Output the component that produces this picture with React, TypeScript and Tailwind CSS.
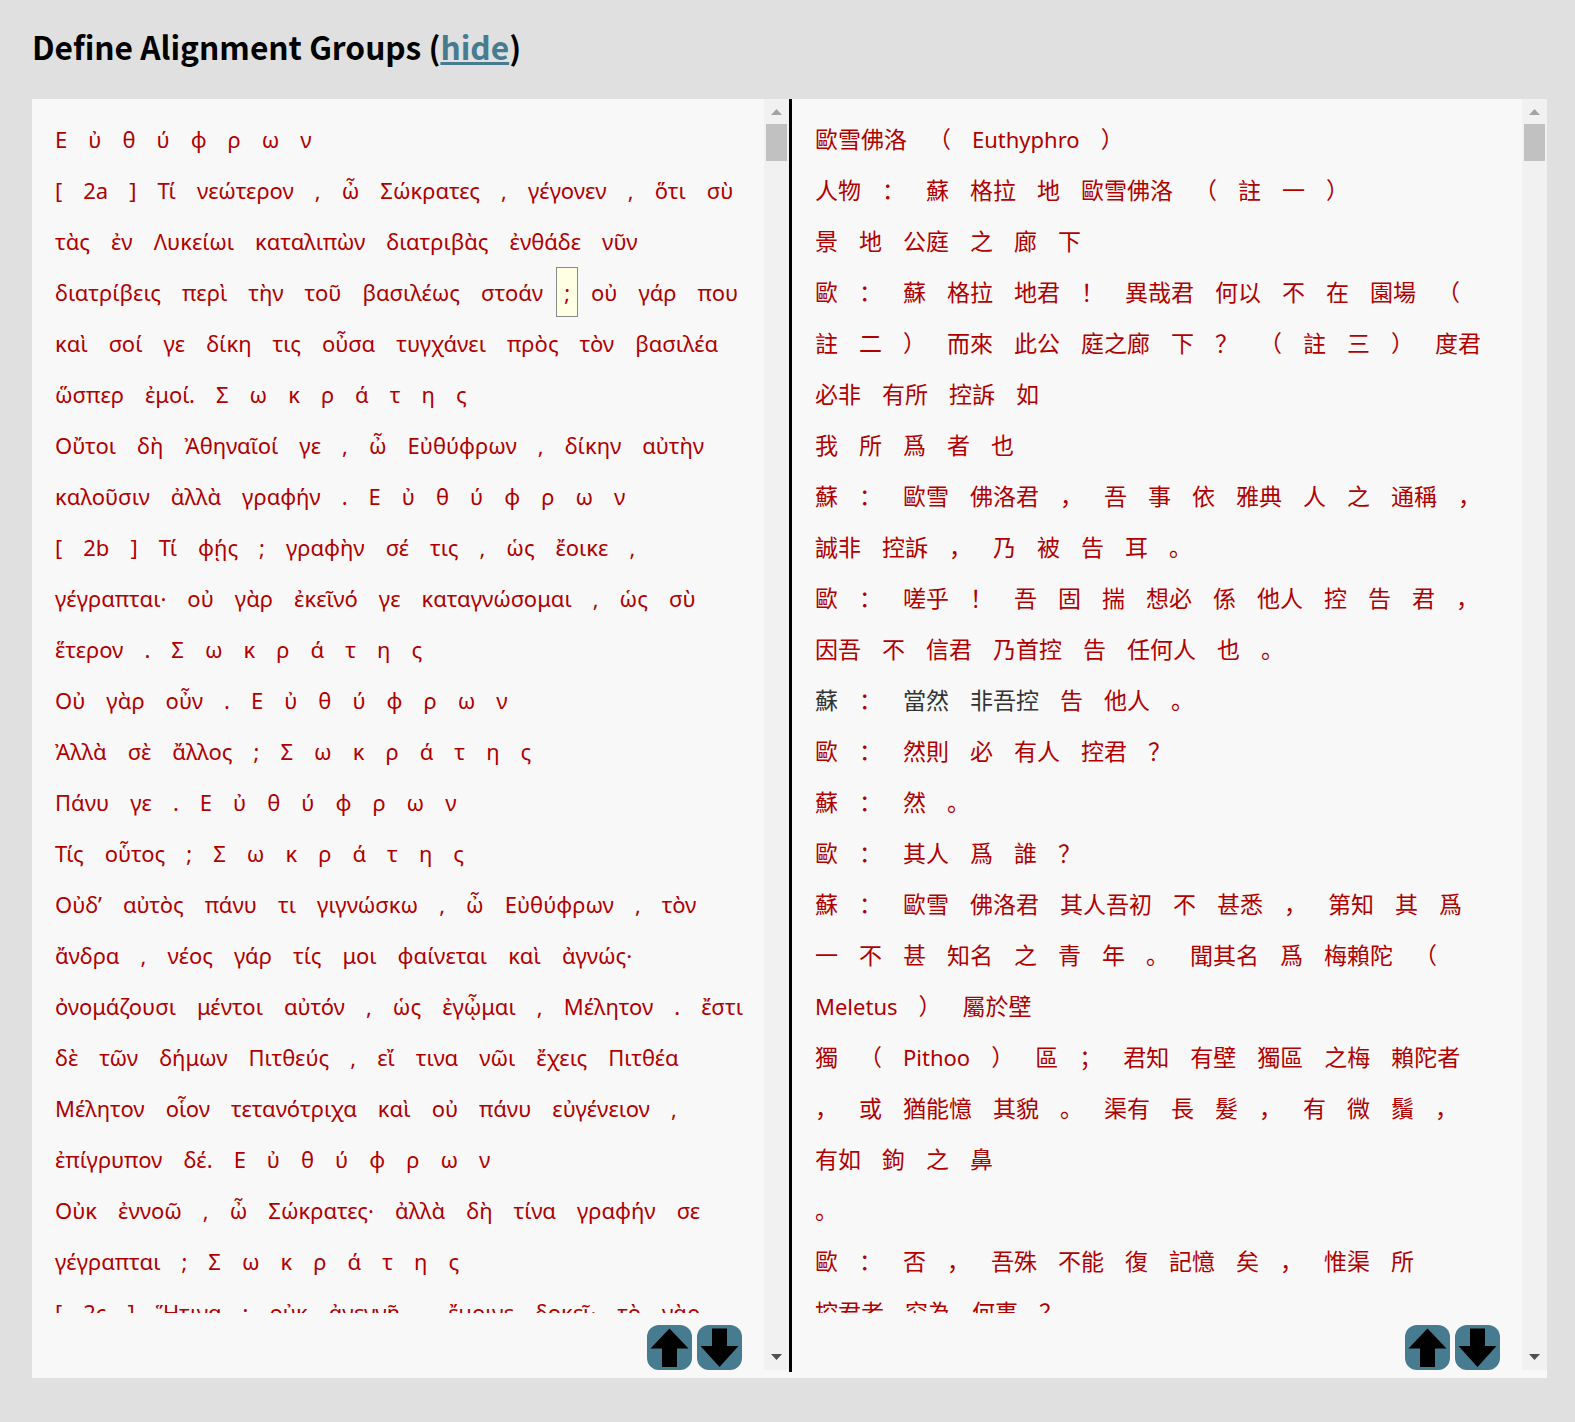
import React from "react";

const LEFT_LINES = [
  "Ε ὐ θ ύ φ ρ ω ν",
  "[ 2a ] Τί νεώτερον , ὦ Σώκρατες , γέγονεν , ὅτι σὺ",
  "τὰς ἐν Λυκείωι καταλιπὼν διατριβὰς ἐνθάδε νῦν",
  "διατρίβεις περὶ τὴν τοῦ βασιλέως στοάν ^; οὐ γάρ που",
  "καὶ σοί γε δίκη τις οὖσα τυγχάνει πρὸς τὸν βασιλέα",
  "ὥσπερ ἐμοί. Σ ω κ ρ ά τ η ς",
  "Οὔτοι δὴ Ἀθηναῖοί γε , ὦ Εὐθύφρων , δίκην αὐτὴν",
  "καλοῦσιν ἀλλὰ γραφήν . Ε ὐ θ ύ φ ρ ω ν",
  "[ 2b ] Τί φῄς ; γραφὴν σέ τις , ὡς ἔοικε ,",
  "γέγραπται· οὐ γὰρ ἐκεῖνό γε καταγνώσομαι , ὡς σὺ",
  "ἕτερον . Σ ω κ ρ ά τ η ς",
  "Οὐ γὰρ οὖν . Ε ὐ θ ύ φ ρ ω ν",
  "Ἀλλὰ σὲ ἄλλος ; Σ ω κ ρ ά τ η ς",
  "Πάνυ γε . Ε ὐ θ ύ φ ρ ω ν",
  "Τίς οὗτος ; Σ ω κ ρ ά τ η ς",
  "Οὐδ’ αὐτὸς πάνυ τι γιγνώσκω , ὦ Εὐθύφρων , τὸν",
  "ἄνδρα , νέος γάρ τίς μοι φαίνεται καὶ ἀγνώς·",
  "ὀνομάζουσι μέντοι αὐτόν , ὡς ἐγᾦμαι , Μέλητον . ἔστι",
  "δὲ τῶν δήμων Πιτθεύς , εἴ τινα νῶι ἔχεις Πιτθέα",
  "Μέλητον οἷον τετανότριχα καὶ οὐ πάνυ εὐγένειον ,",
  "ἐπίγρυπον δέ. Ε ὐ θ ύ φ ρ ω ν",
  "Οὐκ ἐννοῶ , ὦ Σώκρατες· ἀλλὰ δὴ τίνα γραφήν σε",
  "γέγραπται ; Σ ω κ ρ ά τ η ς",
  "[ 2c ] Ἥτινα ; οὐκ ἀγεννῆ , ἔμοιγε δοκεῖ· τὸ γὰρ",
  "νέον ὄντα τοσοῦτον πρᾶγμα ἐγνωκέναι οὐ φαῦλόν ἐστιν",
];

const RIGHT_LINES = [
  "歐雪佛洛 （ Euthyphro ）",
  "人物 ： 蘇 格拉 地 歐雪佛洛 （ 註 一 ）",
  "景 地 公庭 之 廊 下",
  "歐 ： 蘇 格拉 地君 ！ 異哉君 何以 不 在 園場 （",
  "註 二 ） 而來 此公 庭之廊 下 ？ （ 註 三 ） 度君",
  "必非 有所 控訴 如",
  "我 所 爲 者 也",
  "蘇 ： 歐雪 佛洛君 ， 吾 事 依 雅典 人 之 通稱 ，",
  "誠非 控訴 ， 乃 被 告 耳 。",
  "歐 ： 嗟乎 ！ 吾 固 揣 想必 係 他人 控 告 君 ，",
  "因吾 不 信君 乃首控 告 任何人 也 。",
  "~蘇 ： ~當然 ~非吾控 告 他人 。",
  "歐 ： 然則 必 有人 控君 ？",
  "蘇 ： 然 。",
  "歐 ： 其人 爲 誰 ？",
  "蘇 ： 歐雪 佛洛君 其人吾初 不 甚悉 ， 第知 其 爲",
  "一 不 甚 知名 之 青 年 。 聞其名 爲 梅賴陀 （",
  "Meletus ） 屬於壁",
  "獨 （ Pithoo ） 區 ； 君知 有壁 獨區 之梅 賴陀者",
  "， 或 猶能憶 其貌 。 渠有 長 髮 ， 有 微 鬚 ，",
  "有如 鉤 之 鼻",
  "。",
  "歐 ： 否 ， 吾殊 不能 復 記憶 矣 ， 惟渠 所",
  "控君者 究為 何事 ？",
  "蘇 ： 控 我 之 事",
];

const Token = ({ raw, cjk }: { raw: string; cjk: boolean }) => {
  const selected = raw.startsWith("^");
  const dark = raw.startsWith("~");
  const text = selected || dark ? raw.slice(1) : raw;
  // the Chinese glyphs in the reference run a touch larger than the Latin/Greek ones
  const size = cjk && !/[A-Za-z]/.test(text) ? "text-[23px]" : "text-[22px]";
  return (
    <span
      className={
        "h-[50px] px-[7px] leading-[48px] border " +
        size +
        " " +
        (selected
          ? "border-[#8a8a8a] bg-[#ffffe4] text-[#b00000]"
          : dark
          ? "border-transparent text-[#333333]"
          : "border-transparent text-[#b00000]")
      }
    >
      {text}
    </span>
  );
};

const ArrowButton = ({ dir }: { dir: "up" | "down" }) => (
  <button className="w-[45px] h-[45px] rounded-[12px] bg-[#477b8f] flex items-center justify-center">
    <svg width="45" height="45" viewBox="0 0 45 45">
      {dir === "up" ? (
        <polygon points="22.5,3.5 41.5,23.5 30,23.5 30,42 15,42 15,23.5 3.5,23.5" fill="#000" />
      ) : (
        <polygon points="15,3.5 30,3.5 30,21 41.5,21 22.5,42 3.5,21 15,21" fill="#000" />
      )}
    </svg>
  </button>
);

const Scrollbar = () => (
  <div className="w-[25px] h-full bg-[#f1f1f1] flex flex-col items-center pt-[10px] pb-[10px]">
    <svg width="11" height="6" viewBox="0 0 11 6">
      <polygon points="5.5,0 11,6 0,6" fill="#a3a3a3" />
    </svg>
    <div className="mt-[9px] w-[21px] h-[37px] bg-[#c1c1c1]" />
    <div className="flex-1" />
    <svg width="11" height="6" viewBox="0 0 11 6">
      <polygon points="0,0 11,0 5.5,6" fill="#505050" />
    </svg>
  </div>
);

const Pane = ({ lines, width, cjk }: { lines: string[]; width: string; cjk: boolean }) => (
  <div className={"flex h-[1271px] " + width}>
    <div className="relative flex-1 overflow-hidden">
      <div className="pt-[15px] pl-[15px] font-['Noto_Sans','Noto_Sans_CJK_SC',sans-serif]">
        {lines.map((line, i) => (
          <div key={i} className="flex items-start gap-x-[5px] h-[51px] whitespace-nowrap">
            {line.split(" ").map((tok, j) => (
              <Token key={j} raw={tok} cjk={cjk} />
            ))}
          </div>
        ))}
      </div>
      <div className="absolute left-0 right-0 bottom-0 h-[57px] bg-[#f8f8f8] flex items-end justify-end gap-[5px] pr-[22px]">
        <ArrowButton dir="up" />
        <ArrowButton dir="down" />
      </div>
    </div>
    <Scrollbar />
  </div>
);

export default function App() {
  return (
    <div className="min-h-[1422px] bg-[#e0e0e0] pl-[32px] pr-[28px]">
      <h2 className="pt-[24px] text-[31.7px] leading-[44px] font-bold text-black font-['Noto_Sans_CJK_TC','Noto_Sans',sans-serif]">
        Define Alignment Groups (
        <a href="#" className="text-[#477b8f] underline decoration-[3px]">
          hide
        </a>
        )
      </h2>
      <div className="mt-[31px] w-[1515px] h-[1279px] bg-[#f8f8f8] flex items-start">
        <Pane lines={LEFT_LINES} width="w-[757px]" cjk={false} />
        <div className="w-[3px] h-[1273px] bg-black" />
        <Pane lines={RIGHT_LINES} width="w-[755px]" cjk={true} />
      </div>
    </div>
  );
}
